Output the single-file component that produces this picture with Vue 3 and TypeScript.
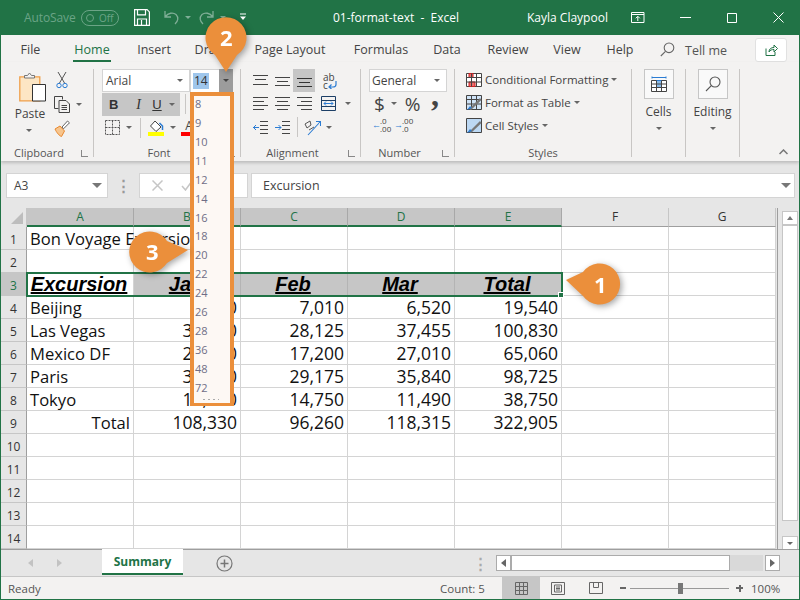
<script setup lang="ts">
const tabs = ['File', 'Home', 'Insert', 'Draw', 'Page Layout', 'Formulas', 'Data', 'Review', 'View', 'Help']
const sizes = [8, 9, 10, 11, 12, 14, 16, 18, 20, 22, 24, 26, 28, 36, 48, 72]
const columns = ['A', 'B', 'C', 'D', 'E', 'F', 'G']
const activeCols = ['A', 'B', 'C', 'D', 'E']

interface Row { n: number; cells: string[] }
const rows: Row[] = [
  { n: 1, cells: ['Bon Voyage Excursions', '', '', '', '', '', ''] },
  { n: 2, cells: ['', '', '', '', '', '', ''] },
  { n: 3, cells: ['Excursion', 'Jan', 'Feb', 'Mar', 'Total', '', ''] },
  { n: 4, cells: ['Beijing', '6,010', '7,010', '6,520', '19,540', '', ''] },
  { n: 5, cells: ['Las Vegas', '35,250', '28,125', '37,455', '100,830', '', ''] },
  { n: 6, cells: ['Mexico DF', '20,850', '17,200', '27,010', '65,060', '', ''] },
  { n: 7, cells: ['Paris', '33,710', '29,175', '35,840', '98,725', '', ''] },
  { n: 8, cells: ['Tokyo', '12,510', '14,750', '11,490', '38,750', '', ''] },
  { n: 9, cells: ['Total', '108,330', '96,260', '118,315', '322,905', '', ''] },
  ...[10, 11, 12, 13, 14].map((n) => ({ n, cells: ['', '', '', '', '', '', ''] })),
]

function cellClass(r: number, c: number): string[] {
  const out: string[] = []
  if (r === 3) {
    out.push('head-cell')
    if (c > 0 && c < 5) out.push('filled')
  } else {
    if (c === 0) out.push('txt')
    if (c > 0 || r === 9) out.push('num')
  }
  return out
}
</script>

<template>
  <div class="app">
    <header class="title">
      <span class="autosave">AutoSave</span>
      <span class="toggle"><i></i>Off</span>
      <svg class="t-save" width="16" height="17" viewBox="0 0 16 17" fill="none" stroke="#fff" stroke-width="1.2"><path d="M.6.6h12.5l2.3 2.3v13.5H.6zM3.5.8v5h8v-5M3.5 16v-6h9v6M7.5 11v5"/></svg>
      <svg class="t-undo" width="15" height="15" viewBox="0 0 15 15" fill="none" stroke="#7fae96" stroke-width="1.3"><path d="M1 1v6h6M1.5 6.5C4 3 9 2 12 4.500c3 3 2 7-1 9.500"/></svg>
      <span class="t-car dim"></span>
      <svg class="t-redo" width="15" height="15" viewBox="0 0 15 15" fill="none" stroke="#7fae96" stroke-width="1.3"><path d="M14 1v6H8M13.500 6.500C11 3 6 2 3 4.500c-3 3-2 7 1 9.500"/></svg>
      <span class="t-car dim"></span>
      <svg class="t-cust" width="7" height="8" viewBox="0 0 7 8"><path d="M0 .5h6v1H0zM0 3.500h6L3 7z" fill="#fff"/></svg>
      <span class="doc">01-format-text&nbsp; -&nbsp; Excel</span>
      <span class="user">Kayla Claypool</span>
      <svg class="t-disp" width="14" height="11" viewBox="0 0 14 11" fill="none" stroke="#fff"><path d="M.5.500h12.500v10H.5zM.5 2.500h12.500M6.800 9V4.500M4.800 6.300l2-2 2 2"/></svg>
      <svg class="t-min" width="11" height="1" viewBox="0 0 11 1"><path d="M0 0h11v1H0z" fill="#fff"/></svg>
      <svg class="t-max" width="10" height="10" viewBox="0 0 10 10" fill="none" stroke="#fff"><path d="M.5.500h9v9h-9z"/></svg>
      <svg class="t-close" width="11" height="11" viewBox="0 0 11 11" fill="none" stroke="#fff"><path d="M.5.500l10 10M10.500.500l-10 10"/></svg>
    </header>

    <nav class="tabs">
      <span v-for="t in tabs" :key="t" class="tab" :class="{ active: t === 'Home' }">{{ t }}</span>
      <svg class="search" width="15" height="15" viewBox="0 0 15 15" fill="none" stroke="#666" stroke-width="1.100"><circle cx="9" cy="5.800" r="4.800"/><path d="M5.500 9.300L.8 14"/></svg>
      <span class="tell">Tell me</span>
      <span class="share">
        <svg width="13" height="12" viewBox="0 0 13 12" fill="none" stroke="#217346"><path d="M1 4.500v7h9V8M4 8c0-3 2-4.500 5-4.500V1l3.500 3.500L9 8V5.500C7 5.500 5 6 4 8z"/></svg>
      </span>
    </nav>

    <section class="ribbon">
      <div class="group g-clip">
        <div class="g-body clip-body">
          <div class="paste">
            <svg width="27" height="30" viewBox="0 0 27 30" fill="none"><path d="M.8 4.800h20v24H.8z" fill="#fde6c4" stroke="#ef9f4a" stroke-width="1.300"/><path d="M5.500 6V3.500h3l2-2.500 2 2.500h3V6z" fill="#f3f2f1" stroke="#777"/><path d="M13.500 12.500h13v16.500h-13z" fill="#fff" stroke="#333"/></svg>
            <span>Paste</span>
            <i class="car"></i>
          </div>
          <div class="clip-tools">
            <svg width="12" height="17" viewBox="0 0 12 17" fill="none"><path d="M2 0l6.500 11M10 0L3.500 11" stroke="#555"/><circle cx="3" cy="13.500" r="2.200" stroke="#2b7cd3"/><circle cx="9" cy="13.500" r="2.200" stroke="#2b7cd3"/></svg>
            <div class="tool-row">
              <svg width="17" height="17" viewBox="0 0 17 17" fill="none" stroke="#444"><path d="M.5.500h8l0 3M.5.500v12h4"/><path d="M5 4.500h7l3.500 3.500v8.500H5z" fill="#f3f2f1"/><path d="M7.500 9.500h5.500M7.500 11.500h5.500M7.500 13.500h5.500"/></svg>
              <i class="car"></i>
            </div>
            <svg width="16" height="17" viewBox="0 0 16 17" fill="none"><path d="M1 9l5-3 4.500 5-3 5.500c-2-.5-5-4-6.500-7.500z" fill="#f7c58d" stroke="#e8872c"/><path d="M8 7l5.500-6 2 1.800-6 6z" fill="#fff" stroke="#666"/></svg>
          </div>
        </div>
        <div class="g-label"><span>Clipboard</span><i class="launch"></i></div>
      </div>

      <div class="group g-font">
        <div class="g-body font-body">
          <div class="font-row">
            <div class="font-name"><span>Arial</span><i class="car"></i></div>
            <div class="font-size"><span class="sel">14</span><span class="size-btn"><i class="car dark"></i></span></div>
          </div>
          <div class="biu-row">
            <div class="biu">
              <b>B</b><em>I</em><u>U</u><i class="car"></i>
            </div>
            <span class="vsep"></span>
          </div>
          <div class="bord-row">
            <svg width="15" height="15" viewBox="0 0 15 15" fill="none" stroke="#555" stroke-dasharray="2 1"><path d="M.5.500h14v14H.5zM7.500.5v14M.5 7.500h14"/></svg>
            <i class="car"></i>
            <span class="vsep short"></span>
            <span class="fill-ic">
              <svg width="15" height="12" viewBox="0 0 15 12" fill="none"><path d="M6 1l6 6-5 4.500L1.500 6z" fill="#fff" stroke="#444"/><path d="M10.500 3l3 3v4" stroke="#2b7cd3" stroke-width="1.500"/></svg>
              <i class="swatch yellow"></i>
            </span>
            <i class="car"></i>
            <span class="fill-ic color-a">A<i class="swatch red"></i></span>
          </div>
        </div>
        <div class="g-label"><span>Font</span><i class="launch"></i></div>
      </div>

      <div class="group g-align">
        <div class="g-body">
          <div class="al-row r1">
            <svg width="15" height="11" viewBox="0 0 15 11" stroke="#444"><path d="M0 .5h15M2 4.500h11M0 9.500h15" /></svg>
            <svg class="m7" width="15" height="11" viewBox="0 0 15 11" stroke="#444"><path d="M0 2.500h15M2 6.500h11M0 10.500h15" /></svg>
            <span class="al-on"><svg width="15" height="13" viewBox="0 0 15 13" stroke="#333"><path d="M0 4.500h15M2 8.500h11M0 12.500h15" /></svg></span>
            <span class="wrap-t">ab<br>c<svg width="9" height="8" viewBox="0 0 9 8" fill="none" stroke="#2b7cd3" stroke-width="1.200"><path d="M8 0v3.500c0 2-1.500 2.500-3 2.500H1M3.500 3.500L1 6l2.500 2"/></svg></span>
          </div>
          <div class="al-row r2">
            <svg width="15" height="13" viewBox="0 0 15 13" stroke="#444"><path d="M0 .5h15M0 4.500h11M0 8.500h15M0 12.500h11"/></svg>
            <svg class="m7" width="15" height="13" viewBox="0 0 15 13" stroke="#444"><path d="M0 .5h15M2 4.500h11M0 8.500h15M2 12.500h11"/></svg>
            <svg class="m7" width="15" height="13" viewBox="0 0 15 13" stroke="#444"><path d="M0 .5h15M4 4.500h11M0 8.500h15M4 12.500h11"/></svg>
            <svg class="m9" width="15" height="15" viewBox="0 0 15 15" fill="none" stroke="#1c3f66"><path d="M.5.500h14v14H.5zM.5 4.500h14M.5 10.500h14"/><path d="M3 7.500h9M5 5.500l-2 2 2 2M10 5.500l2 2-2 2" stroke="#2b7cd3"/></svg>
            <i class="car m9"></i>
          </div>
          <div class="al-row r3">
            <svg width="15" height="13" viewBox="0 0 15 13" fill="none" stroke="#444"><path d="M7 .5h8M7 4.500h8M7 8.500h8M7 12.500h8"/><path d="M0 6.500h6M3 4L.5 6.500 3 9" stroke="#2b7cd3"/></svg>
            <svg class="m7" width="15" height="13" viewBox="0 0 15 13" fill="none" stroke="#444"><path d="M7 .5h8M7 4.500h8M7 8.500h8M7 12.500h8"/><path d="M0 6.500h6M3.500 4L6 6.500 3.500 9" stroke="#2b7cd3"/></svg>
            <span class="vsep short s2"></span>
            <svg class="m6" width="17" height="17" viewBox="0 0 17 17" fill="none"><path d="M4 16L16 3M12 2.500l4.500 0 0 4.500" stroke="#2b7cd3" stroke-width="1.100"/><path d="M1 5l5-3 1 4-4 3zM5 11l5-3" stroke="#555"/></svg>
            <i class="car m5"></i>
          </div>
        </div>
        <div class="g-label"><span>Alignment</span><i class="launch"></i></div>
      </div>

      <div class="group g-num">
        <div class="g-body">
          <div class="gen"><span>General</span><i class="car"></i></div>
          <div class="num-row">
            <span class="dollar">$</span><i class="car"></i><span class="pct">%</span><span class="comma">,</span>
          </div>
          <div class="dec-row">
            <span class="dec"><b>←</b><span>.0<br>.00</span></span>
            <span class="dec"><b>→</b><span>.00<br>.0</span></span>
          </div>
        </div>
        <div class="g-label"><span>Number</span><i class="launch"></i></div>
      </div>

      <div class="group g-styles">
        <div class="g-body styles-body">
          <div class="st-row">
            <svg width="16" height="14" viewBox="0 0 16 14" fill="#fff" stroke="#444"><path d="M.5.500h15v13H.5z"/><path d="M3 .5h4v4H3zM3 9h6v4.500H3z" fill="#ef6b6b" stroke="#c22"/><path d="M.5 4.500h15M.5 9h15M5.500.5v13M10.500.5v13" fill="none"/></svg>
            <span>Conditional Formatting</span><i class="car"></i>
          </div>
          <div class="st-row">
            <svg width="16" height="15" viewBox="0 0 16 15" fill="#cfe3f7" stroke="#444"><path d="M.5.500h15v14H.5z"/><path d="M.5 4.500h15M.5 9h15M5.500.5v14M10.500.5v14" fill="none"/><path d="M3 14L14 3l1.500 2L5 15z" fill="#777" stroke="none"/><path d="M1 15l3-4 2 2z" fill="#2b7cd3" stroke="none"/></svg>
            <span>Format as Table</span><i class="car"></i>
          </div>
          <div class="st-row">
            <svg width="16" height="15" viewBox="0 0 16 15" fill="#bcd8f3" stroke="#444"><path d="M.5.500h15v14H.5z"/><path d="M3 14L14 3l1.500 2L5 15z" fill="#777" stroke="none"/><path d="M1 15l3-4 2 2z" fill="#2b7cd3" stroke="none"/></svg>
            <span>Cell Styles</span><i class="car"></i>
          </div>
        </div>
        <div class="g-label center"><span>Styles</span></div>
      </div>

      <div class="group g-big">
        <div class="bigbtn">
          <svg width="16" height="16" viewBox="0 0 16 16" fill="none" stroke="#444"><path d="M1 1.500h14M1 .5v2M15 .5v2" stroke="#2b7cd3"/><path d="M.5 4.500h15v11H.5z" fill="#fff"/><path d="M5.500 4.500h5v7h-5z" fill="#8abbe9" stroke="#2b7cd3"/><path d="M.5 8h15M.5 11.500h15M5.500 4.500v11M10.500 4.500v11"/></svg>
        </div>
        <span class="big-t">Cells</span>
        <i class="car"></i>
      </div>
      <div class="group g-big">
        <div class="bigbtn">
          <svg width="16" height="16" viewBox="0 0 16 16" fill="none" stroke="#555" stroke-width="1.100"><circle cx="10" cy="6" r="5"/><path d="M6.300 9.700L1 15"/></svg>
        </div>
        <span class="big-t">Editing</span>
        <i class="car"></i>
      </div>
      <svg class="collapse" width="9" height="6" viewBox="0 0 9 6" fill="none" stroke="#777" stroke-width="1.500"><path d="M.5 5l4-4 4 4"/></svg>
    </section>

    <section class="fbar">
      <div class="name-box"><span>A3</span><i class="car big"></i></div>
      <span class="grip">⋮</span>
      <div class="fx-box">
        <svg width="11" height="11" viewBox="0 0 11 11" stroke="#c6c6c6" stroke-width="1.500"><path d="M.5.500l10 10M10.500.500l-10 10"/></svg>
        <svg class="check" width="12" height="11" viewBox="0 0 12 11" fill="none" stroke="#c6c6c6" stroke-width="1.500"><path d="M1 6l3.500 4L11 1"/></svg>
        <em class="fx">fx</em>
      </div>
      <div class="f-input"><span>Excursion</span><i class="car big"></i></div>
    </section>

    <section class="sheet">
      <div class="grid-wrap">
        <div class="col-head">
          <div class="corner"><i></i></div>
          <div v-for="c in columns" :key="c" class="ch" :class="{ on: activeCols.includes(c) }">{{ c }}</div>
        </div>
        <div v-for="row in rows" :key="row.n" class="row">
          <div class="rh" :class="{ on: row.n === 3 }">{{ row.n }}</div>
          <div v-for="(cell, i) in row.cells" :key="i" class="cell" :class="cellClass(row.n, i)"><span v-if="cell">{{ cell }}</span></div>
        </div>
      </div>
      <div class="vscroll">
        <span class="sb-btn"><i class="car up"></i></span>
        <span class="sb-thumb"></span>
        <span class="sb-btn"><i class="car"></i></span>
      </div>
    </section>

    <section class="sheetbar">
      <i class="arr l"></i><i class="arr r"></i>
      <span class="s-tab">Summary</span>
      <svg class="plus" width="17" height="17" viewBox="0 0 17 17" fill="none" stroke="#777"><circle cx="8.500" cy="8.500" r="7.500" stroke-width="1.200"/><path d="M4.500 8.500h8M8.500 4.500v8" stroke-width="1.500"/></svg>
      <span class="s-grip">⋮</span>
      <div class="hscroll">
        <span class="h-btn"><i class="arr small l"></i></span>
        <span class="h-thumb"></span>
        <span class="h-track"></span>
        <span class="h-btn end"><i class="arr small r"></i></span>
      </div>
    </section>

    <footer class="status">
      <span class="ready">Ready</span>
      <span class="count">Count: 5</span>
      <span class="view-on">
        <svg width="13" height="13" viewBox="0 0 13 13" fill="none" stroke="#666"><path d="M.5.500h12v12H.5zM4.500.5v12M8.500.5v12M.5 4.500h12M.5 8.500h12"/></svg>
      </span>
      <svg class="v2" width="14" height="13" viewBox="0 0 14 13" fill="none" stroke="#666"><path d="M.5.500h13v12H.5zM3.500 3h7v7h-7zM5 5h4M5 6.500h4M5 8h4"/></svg>
      <svg class="v3" width="14" height="12" viewBox="0 0 14 12" fill="none" stroke="#666"><path d="M.5.500h13v11H.5zM4.500.5v5h5v-5"/></svg>
      <span class="z-minus"></span>
      <span class="slider"><i></i></span>
      <span class="z-plus"></span>
      <span class="zoom">100%</span>
    </footer>

    <!-- overlays -->
    <div class="selection"><i></i></div>

    <div class="size-list">
      <span v-for="s in sizes" :key="s">{{ s }}</span>
      <i class="gripper"></i>
    </div>

    <div class="callout c1">
      <svg width="64" height="50" viewBox="0 0 64 50"><path d="M6 21l17-8a20.500 20.500 0 1 1 0 24z" fill="#eb8f3b"/></svg>
      <b>1</b>
    </div>
    <div class="callout c2">
      <svg width="50" height="64" viewBox="0 0 50 64"><path d="M14 41a20.500 20.500 0 1 1 22 0l-11 17z" fill="#eb8f3b"/></svg>
      <b>2</b>
    </div>
    <div class="callout c3">
      <svg width="64" height="50" viewBox="0 0 64 50"><path d="M62 24l-21-9a20.500 20.500 0 1 0 0 22z" fill="#eb8f3b"/></svg>
      <b>3</b>
    </div>
  </div>
</template>

<style>
html, body { margin: 0; padding: 0; }
</style>

<style scoped>
.app {
  position: relative;
  width: 800px;
  height: 600px;
  box-sizing: border-box;
  overflow: hidden;
  display: flex;
  flex-direction: column;
  background: #f3f2f1;
  border-left: 1px solid #217346;
  border-right: 1px solid #217346;
  border-bottom: 1px solid #217346;
  font-family: "Open Sans", "Noto Sans", sans-serif;
  font-size: 12px;
  color: #444;
}
i { display: block; font-style: normal; }

.car {
  flex: none;
  width: 0;
  height: 0;
  border-left: 3.5px solid transparent;
  border-right: 3.5px solid transparent;
  border-top: 3.5px solid #666;
}
.car.big { border-left-width: 5px; border-right-width: 5px; border-top-width: 5px; border-top-color: #777; }
.car.dark { border-top-color: #444; }
.car.up { border-top: 0; border-bottom: 4px solid #777; }

/* title bar */
.title {
  height: 35px;
  flex: none;
  margin-left: -1px;
  margin-right: -1px;
  background: #217346;
  color: #fff;
  display: flex;
  align-items: center;
  font-size: 12px;
}
.autosave { margin-left: 24px; width: 50px; color: #6ba486; letter-spacing: -.1px; white-space: nowrap; }
.toggle {
  margin-left: 7px;
  width: 38px;
  height: 16px;
  box-sizing: border-box;
  border: 1px solid #6ba486;
  border-radius: 8px;
  color: #6ba486;
  font-size: 10px;
  display: flex;
  align-items: center;
  gap: 5px;
  padding-left: 4px;
}
.toggle i { width: 8px; height: 8px; border-radius: 50%; border: 1px solid #6ba486; box-sizing: border-box; }
.t-save { margin-left: 15px; }
.t-undo { margin-left: 14px; }
.t-car { width: 0; height: 0; margin-left: 6px; border-left: 3px solid transparent; border-right: 3px solid transparent; border-top: 3px solid #7fae96; }
.t-redo { margin-left: 8px; }
.t-cust { margin-left: 14px; margin-top: -1px; }
.doc { margin-left: 86px; width: 194px; white-space: nowrap; }
.user { width: 104px; white-space: nowrap; }
.t-min { margin-left: 35px; }
.t-max { margin-left: 36px; }
.t-close { margin-left: 36px; }

/* tabs */
.tabs {
  height: 27px;
  flex: none;
  display: grid;
  grid-template-columns: 59px 64px 60px 52px 108px 74px 58px 64px 54px 52px 39px 70px 32px;
  align-items: center;
  font-size: 12.5px;
  color: #444;
}
.tab { text-align: center; white-space: nowrap; position: relative; height: 27px; line-height: 30px; }
.tab.active { color: #217346; }
.tab.active::after {
  content: "";
  position: absolute;
  left: 13px;
  right: 13px;
  bottom: 0;
  height: 2px;
  background: #217346;
}
.search { margin-top: 2px; margin-left: 14px; }
.tell { margin-top: 3px; white-space: nowrap; color: #555; }
.share {
  width: 32px;
  height: 24px;
  background: #fff;
  border: 1px solid #e1e1e1;
  border-radius: 3px;
  box-sizing: border-box;
  display: flex;
  align-items: center;
  justify-content: center;
  margin-top: 2px;
}

/* ribbon */
.ribbon {
  position: relative;
  height: 99px;
  flex: none;
  padding-top: 7px;
  box-sizing: border-box;
  display: flex;
  align-items: flex-start;
  box-shadow: 0 2px 3px rgba(0, 0, 0, .18);
  z-index: 1;
  background: #f3f2f1;
}
.group {
  position: relative;
  box-sizing: border-box;
  height: 88px;
  border-right: 1px solid #c8c6c4;
  display: flex;
  flex-direction: column;
  flex: none;
}
.g-body { flex: 1; min-height: 0; }
.g-label {
  height: 16px;
  margin-bottom: -4px;
  padding-right: 16px;
  display: flex;
  align-items: center;
  justify-content: center;
  position: relative;
  font-size: 11px;
  color: #555;
  line-height: 16px;
}
.launch {
  position: absolute;
  right: 5px;
  top: 5px;
  width: 7px;
  height: 7px;
  border-left: 1px solid #888;
  border-bottom: 1px solid #888;
  box-sizing: border-box;
}
.g-clip { width: 93px; }
.g-font { width: 147px; }
.g-align { width: 120px; }
.g-num { width: 94px; }
.g-styles { width: 177px; }
.g-big { width: 54px; align-items: center; }

.clip-body { display: flex; }
.paste {
  margin-left: 18px;
  width: 27px;
  display: flex;
  flex-direction: column;
  align-items: center;
  padding-top: 3px;
}
.paste span { font-size: 12px; margin: 4px 0 0 -5px; color: #444; line-height: 16px; }
.paste .car { margin: 7px 0 0 -7px; }
.clip-tools {
  margin-left: 8px;
  padding-top: 3px;
  width: 34px;
  display: flex;
  flex-direction: column;
  gap: 7px;
}
.clip-tools > svg:first-child { margin-left: 2px; }
.tool-row { display: flex; align-items: center; gap: 5px; }

.font-body { padding-left: 8px; display: flex; flex-direction: column; }
.font-row { display: flex; height: 23px; }
.font-name {
  width: 88px;
  height: 23px;
  box-sizing: border-box;
  background: #fff;
  border: 1px solid #d4d4d4;
  display: flex;
  align-items: center;
  justify-content: space-between;
  padding: 0 6px 0 3px;
  font-size: 12px;
  color: #444;
}
.font-size {
  width: 43px;
  height: 23px;
  box-sizing: border-box;
  background: #fff;
  border: 1px solid #d4d4d4;
  display: flex;
  align-items: center;
  justify-content: space-between;
  padding-left: 2px;
  border-right: 0;
  border-bottom: 0;
}
.sel { background: #9fc6ec; height: 16px; line-height: 16px; padding: 0 1px; color: #333; font-size: 12px; }
.size-btn {
  width: 14px;
  height: 23px;
  margin-top: -1px;
  background: #9c9c9c;
  display: flex;
  align-items: center;
  justify-content: center;
}
.biu-row { display: flex; margin-top: 1px; height: 23px; }
.biu {
  width: 78px;
  height: 23px;
  background: #c6c6c6;
  display: flex;
  align-items: center;
  font-family: "Liberation Serif", serif;
  font-size: 13px;
  color: #333;
  line-height: 21px;
}
.biu b { margin-left: 7px; width: 21px; font-family: "Liberation Sans", sans-serif; font-size: 13px; }
.biu em { width: 17px; font-size: 14px; text-align: center; }
.biu u { width: 20px; text-align: center; font-family: "Liberation Sans", sans-serif; font-size: 13px; }
.biu .car { margin-left: 2px; }
.vsep { width: 1px; height: 20px; background: #c8c6c4; margin-left: 5px; margin-top: 1px; }
.bord-row { display: flex; align-items: center; padding-left: 3px; height: 21px; margin-top: 1px; }
.bord-row .car { margin-left: 6px; }
.vsep.short { height: 20px; margin-left: 8px; margin-right: 7px; margin-top: 0; }
.fill-ic { width: 16px; display: flex; flex-direction: column; align-items: center; }
.swatch { width: 16px; height: 4px; }
.yellow { background: #ffff00; }
.red { background: #ff0000; }
.color-a { margin-left: 5px; font-size: 12px; line-height: 12px; }

.al-row { display: flex; align-items: center; padding-left: 12px; }
.r1 { height: 23px; }
.r2 { height: 23px; }
.r3 { height: 24px; }
.m5 { margin-left: 5px; }
.m6 { margin-left: 6px; }
.m7 { margin-left: 7px; }
.m9 { margin-left: 9px; }
.al-on {
  margin-left: 3px;
  width: 22px;
  height: 23px;
  background: #c6c6c6;
  display: flex;
  align-items: center;
  justify-content: center;
}
.wrap-t { margin-left: 8px; font-size: 10px; line-height: 8px; color: #444; white-space: nowrap; }
.vsep.s2 { margin-left: 7px; margin-right: 0; }

.gen {
  margin-left: 8px;
  width: 78px;
  height: 23px;
  box-sizing: border-box;
  background: #fff;
  border: 1px solid #d4d4d4;
  display: flex;
  align-items: center;
  justify-content: space-between;
  padding: 0 6px 0 2px;
  color: #444;
}
.num-row { display: flex; align-items: center; padding-left: 12px; height: 23px; color: #444; }
.dollar { font-size: 19px; width: 13px; text-align: center; }
.num-row .car { margin-left: 5px; }
.pct { font-size: 19px; margin-left: 7px; width: 17px; text-align: center; }
.comma { font-family: "Liberation Serif", serif; font-size: 32px; font-weight: 700; margin-left: 10px; line-height: 14px; margin-top: -18px; }
.dec-row { display: flex; padding-left: 11px; gap: 6px; margin-top: 2px; }
.dec { display: flex; align-items: center; width: 16px; font-size: 8px; line-height: 8px; color: #444; }
.dec b { color: #2b7cd3; font-size: 9px; font-weight: 400; margin-right: -1px; }

.styles-body { padding: 0 0 0 11px; margin-top: -1px; display: flex; flex-direction: column; }
.st-row { height: 23px; flex: none; display: flex; align-items: center; gap: 3px; color: #444; font-size: 11.5px; white-space: nowrap; }
.st-row .car { border-left-width: 3px; border-right-width: 3px; border-top-width: 3px; }
.g-label.center { padding-right: 0; }

.bigbtn {
  width: 30px;
  height: 30px;
  box-sizing: border-box;
  background: #f9f9f9;
  border: 1px solid #c6c6c6;
  display: flex;
  align-items: center;
  justify-content: center;
}
.big-t { margin-top: 4px; line-height: 18px; color: #444; }
.g-big .car { margin-top: 6px; }
.collapse { position: absolute; right: 11px; bottom: 6px; }

/* formula bar */
.fbar {
  height: 47px;
  flex: none;
  background: #e6e6e6;
  display: flex;
  align-items: flex-start;
  padding-top: 12px;
  box-sizing: border-box;
}
.name-box {
  margin-left: 5px;
  width: 102px;
  height: 25px;
  box-sizing: border-box;
  background: #fff;
  border: 1px solid #d4d4d4;
  display: flex;
  align-items: center;
  justify-content: space-between;
  padding: 0 5px 0 7px;
  color: #444;
}
.grip { width: 31px; text-align: center; line-height: 25px; color: #999; font-size: 15px; font-weight: 700; }
.fx-box {
  width: 109px;
  height: 25px;
  box-sizing: border-box;
  background: #fff;
  border: 1px solid #d4d4d4;
  display: flex;
  align-items: center;
  padding-left: 12px;
}
.check { margin-left: 18px; }
.fx { margin-left: 30px; font-family: "Liberation Serif", serif; color: #888; }
.f-input {
  margin-left: 3px;
  width: 544px;
  height: 25px;
  box-sizing: border-box;
  background: #fff;
  border: 1px solid #d4d4d4;
  display: flex;
  align-items: center;
  justify-content: space-between;
  padding: 0 3px 0 11px;
  font-size: 12.5px;
  color: #444;
}

/* sheet */
.sheet {
  height: 341px;
  flex: none;
  background: #e6e6e6;
  display: flex;
}
.grid-wrap { width: 777px; flex: none; overflow: hidden; border-right: 1px solid #9e9e9e; box-sizing: border-box; }
.col-head { display: flex; height: 19px; }
.corner {
  width: 26px;
  flex: none;
  position: relative;
  border-right: 1px solid #c6c6c6;
  box-sizing: border-box;
}
.corner i {
  position: absolute;
  right: 3px;
  bottom: 3px;
  width: 0;
  height: 0;
  border-left: 12px solid transparent;
  border-bottom: 12px solid #bdbdbd;
}
.ch {
  width: 107px;
  flex: none;
  box-sizing: border-box;
  height: 19px;
  line-height: 18px;
  text-align: center;
  font-size: 12px;
  color: #333;
  border-right: 1px solid #c6c6c6;
  border-bottom: 1px solid #9e9e9e;
  background: #e6e6e6;
}
.ch.on { background: #c6c6c6; color: #217346; border-right-color: #a8a8a8; border-bottom: 2px solid #217346; }
.row { display: flex; height: 23px; }
.rh {
  width: 26px;
  flex: none;
  box-sizing: border-box;
  height: 23px;
  line-height: 25px;
  text-align: center;
  font-size: 12px;
  color: #333;
  background: #e6e6e6;
  border-right: 1px solid #9e9e9e;
  border-bottom: 1px solid #c6c6c6;
}
.rh.on { background: #c6c6c6; color: #217346; }
.cell {
  width: 107px;
  flex: none;
  box-sizing: border-box;
  height: 23px;
  background: #fff;
  border-right: 1px solid #d4d4d4;
  border-bottom: 1px solid #d4d4d4;
  padding: 0 3px 0 3px;
  font-size: 17.5px;
  line-height: 23px;
  color: #111;
  white-space: nowrap;
}
.cell.txt { font-size: 16.6px; }
.cell span { position: relative; z-index: 1; }
.cell.num { text-align: right; }
.cell.head-cell {
  font-family: "Liberation Sans", Arial, sans-serif;
  font-size: 20px;
  font-weight: 700;
  font-style: italic;
  text-decoration: underline;
  text-align: center;
  color: #000;
  line-height: 22px;
  padding: 0 2px 0 0;
}
.cell.filled { background: #c6c6c6; border-right-color: #b4b4b4; }

.vscroll {
  width: 16px;
  margin-left: 4px;
  padding-top: 3px;
  display: flex;
  flex-direction: column;
  height: 341px;
  box-sizing: border-box;
}
.sb-btn {
  height: 14px;
  flex: none;
  background: #fff;
  border: 1px solid #c6c6c6;
  box-sizing: border-box;
  display: flex;
  align-items: center;
  justify-content: center;
}
.sb-thumb { height: 296px; background: #fff; margin: 0 0 15px; flex: none; border: 1px solid #c6c6c6; box-sizing: border-box; }

/* sheet tabs */
.sheetbar {
  height: 28px;
  flex: none;
  box-sizing: border-box;
  background: #e6e6e6;
  border-top: 1px solid #9e9e9e;
  border-bottom: 1px solid #c6c6c6;
  display: flex;
  align-items: center;
  position: relative;
}
.arr { width: 0; height: 0; border-top: 4px solid transparent; border-bottom: 4px solid transparent; }
.arr.l { border-right: 5px solid #c2c2c2; }
.arr.r { border-left: 5px solid #c2c2c2; }
.sheetbar > .arr.l { margin-left: 27px; }
.sheetbar > .arr.r { margin-left: 24px; }
.s-tab {
  margin-left: 40px;
  width: 81px;
  height: 24px;
  margin-top: -3px;
  background: #fff;
  border-bottom: 2px solid #217346;
  box-sizing: content-box;
  text-align: center;
  line-height: 25px;
  font-weight: 700;
  font-size: 12px;
  color: #217346;
}
.plus { margin-left: 33px; }
.s-grip { margin-left: 240px; color: #aaa; font-size: 15px; font-weight: 700; width: 8px; }
.hscroll { margin-left: 15px; display: flex; height: 16px; }
.h-btn {
  width: 15px;
  height: 16px;
  box-sizing: border-box;
  background: #fff;
  border: 1px solid #ababab;
  display: flex;
  align-items: center;
  justify-content: center;
}
.h-btn.end { margin-left: 2px; }
.h-thumb { width: 219px; height: 16px; background: #fff; box-sizing: border-box; border: 1px solid #ababab; }
.h-track { width: 33px; background: #d9d9d9; }
.arr.small.l { border-right-color: #666; }
.arr.small.r { border-left-color: #666; }

/* status */
.status {
  flex: 1;
  min-height: 0;
  display: flex;
  align-items: center;
  background: #f3f2f1;
  font-size: 11.5px;
  color: #555;
}
.ready { margin-left: 7px; width: 432px; }
.count { width: 62px; white-space: nowrap; }
.view-on { width: 38px; height: 22px; background: #c6c6c6; display: flex; align-items: center; justify-content: center; }
.v2 { margin-left: 11px; }
.v3 { margin-left: 24px; }
.z-minus { width: 6px; height: 2px; background: #666; margin-left: 17px; }
.slider { width: 99px; height: 1px; background: #999; margin-left: 4px; position: relative; }
.slider i { position: absolute; left: 48px; top: -5px; width: 5px; height: 11px; background: #777; }
.z-plus {
  width: 7px;
  height: 7px;
  margin-left: 7px;
  background:
    linear-gradient(#666, #666) center / 7px 2px no-repeat,
    linear-gradient(#666, #666) center / 2px 7px no-repeat;
}
.zoom { margin-left: 8px; white-space: nowrap; }

/* overlays */
.selection {
  position: absolute;
  left: 25px;
  top: 272px;
  width: 537px;
  height: 25px;
  box-sizing: border-box;
  border: 2px solid #217346;
  z-index: 3;
}
.selection i {
  position: absolute;
  right: -3px;
  bottom: -3px;
  width: 6px;
  height: 6px;
  box-sizing: border-box;
  background: #217346;
  border: 1px solid #fff;
}
.size-list {
  position: absolute;
  left: 189px;
  top: 92px;
  width: 44px;
  height: 314px;
  box-sizing: border-box;
  background: #fdf8f4;
  border: 4px solid #eb8f3b;
  border-bottom-width: 3px;
  display: flex;
  flex-direction: column;
  z-index: 4;
  padding-left: 1px;
}
.size-list span {
  height: 18.930px;
  line-height: 16px;
  font-size: 11px;
  color: #6f6e86;
  flex: none;
}
.gripper {
  width: 16px;
  height: 1px;
  margin: 0 0 0 8px;
  background: repeating-linear-gradient(90deg, #aaa 0 2px, transparent 2px 5px);
}
.callout {
  position: absolute;
  z-index: 5;
  width: 64px;
  height: 50px;
  filter: drop-shadow(2px 2px 3px rgba(0, 0, 0, .35));
}
.callout svg { display: block; }
.callout b {
  position: absolute;
  color: #fff;
  font-family: "Open Sans", sans-serif;
  font-size: 22px;
  font-weight: 700;
  line-height: 30px;
}
.c1 { left: 559px; top: 259px; }
.c1 b { left: 34px; top: 10px; }
.c2 { left: 200px; top: 14px; width: 50px; height: 64px; }
.c2 b { left: 19px; top: 8px; }
.c3 { left: 125px; top: 226px; }
.c3 b { left: 20px; top: 10px; }
</style>
